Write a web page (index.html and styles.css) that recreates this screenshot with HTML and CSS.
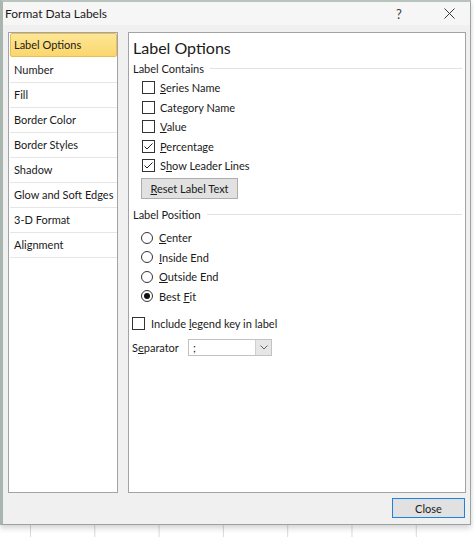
FILE: index.html
```html
<!DOCTYPE html>
<html lang="en">
<head>
    <meta charset="UTF-8">
    <meta name="viewport" content="width=device-width, initial-scale=1.0">
    <title>Format Data Labels</title>
    <link rel="stylesheet" href="styles.css">
</head>
<body>
    <div class="dialog">
        <div class="titlebar">
            <span class="title">Format Data Labels</span>
            <span class="help">?</span>
            <span class="close-x">
                <svg width="11" height="11" viewBox="0 0 11 11"><path d="M0.5 0.5 L10.5 10.5 M10.5 0.5 L0.5 10.5" stroke="#3a3a3a" stroke-width="1" fill="none"/></svg>
            </span>
        </div>

        <div class="body">
            <ul class="nav">
                <li class="active">Label Options</li>
                <li>Number</li>
                <li>Fill</li>
                <li>Border Color</li>
                <li>Border Styles</li>
                <li>Shadow</li>
                <li>Glow and Soft Edges</li>
                <li>3-D Format</li>
                <li>Alignment</li>
            </ul>

            <div class="pane">
                <h1>Label Options</h1>

                <div class="group-title"><span>Label Contains</span></div>
                <div class="options checks">
                    <div class="opt"><span class="box"></span><span><u>S</u>eries Name</span></div>
                    <div class="opt"><span class="box"></span><span>Category Name</span></div>
                    <div class="opt"><span class="box"></span><span><u>V</u>alue</span></div>
                    <div class="opt"><span class="box checked"><svg width="11" height="11" viewBox="0 0 11 11"><path d="M1.5 5.5 L4 8 L9.5 2.5" stroke="#222" stroke-width="1" fill="none"/></svg></span><span><u>P</u>ercentage</span></div>
                    <div class="opt"><span class="box checked"><svg width="11" height="11" viewBox="0 0 11 11"><path d="M1.5 5.5 L4 8 L9.5 2.5" stroke="#222" stroke-width="1" fill="none"/></svg></span><span>S<u>h</u>ow Leader Lines</span></div>
                </div>
                <button class="btn reset"><u>R</u>eset Label Text</button>

                <div class="group-title second"><span>Label Position</span></div>
                <div class="options radios">
                    <div class="opt"><span class="radio"></span><span><u>C</u>enter</span></div>
                    <div class="opt"><span class="radio"></span><span><u>I</u>nside End</span></div>
                    <div class="opt"><span class="radio"></span><span><u>O</u>utside End</span></div>
                    <div class="opt"><span class="radio selected"></span><span>Best <u>F</u>it</span></div>
                </div>

                <div class="opt legend"><span class="box"></span><span>Include <u>l</u>egend key in label</span></div>

                <div class="separator-row">
                    <span class="sep-label">S<u>e</u>parator</span>
                    <div class="combo">
                        <span class="combo-value">;</span>
                        <span class="combo-arrow">
                            <svg width="8" height="5" viewBox="0 0 8 5"><path d="M0.5 0.5 L4 4 L7.5 0.5" stroke="#606060" stroke-width="1" fill="none"/></svg>
                        </span>
                    </div>
                </div>
            </div>
        </div>

        <div class="footer">
            <button class="btn close">Close</button>
        </div>
    </div>
    <div class="sheet"></div>
</body>
</html>
```

FILE: styles.css
```css
* {
    box-sizing: border-box;
}
body {
    margin: 0;
    background-color: #ffffff;
    font-family: Lato, "Liberation Sans", sans-serif;
    font-size: 11px;
    color: #1a1a1a;
}
.dialog {
    width: 471px;
    height: 525px;
    background-color: #f0f0f0;
    border-left: 3px solid #a9b6af;
    border-top: 2px solid #b9c3be;
    border-right: 1px solid #9aa39f;
    border-bottom: 1px solid #9aa39f;
    box-shadow: 0 3px 6px rgba(0,0,0,0.18);
    display: flex;
    flex-direction: column;
    position: relative;
}
.titlebar {
    height: 23px;
    background-color: #f6f6f6;
    display: flex;
    align-items: center;
    padding-left: 2px;
}
.title {
    font-size: 12px;
    flex: 1;
}
.help {
    font-size: 13px;
    color: #3a3a3a;
    width: 10px;
    margin-right: 38px;
}
.close-x {
    display: flex;
    margin-right: 15px;
}
.body {
    display: flex;
    gap: 10px;
    padding: 7px 4px 0 5px;
}
.nav {
    list-style: none;
    margin: 0;
    padding: 0 0 0 1px;
    width: 110px;
    height: 461px;
    background-color: #ffffff;
    border: 1px solid #a3a3a3;
}
.nav li {
    height: 25px;
    line-height: 24px;
    padding-left: 4px;
    border-bottom: 1px solid #e6e6e6;
    white-space: nowrap;
}
.nav li.active {
    height: 24px;
    line-height: 22px;
    margin-bottom: 1px;
    padding-left: 3px;
    border: 1px solid #e6bf5c;
    border-radius: 2px;
    background: linear-gradient(#fde796, #fbd66c);
}
.pane {
    width: 338px;
    height: 461px;
    background-color: #ffffff;
    border: 1px solid #a3a3a3;
    padding: 0 3px 0 3px;
}
.pane h1 {
    font-size: 16px;
    font-weight: normal;
    line-height: 20px;
    margin: 5px 0 0 1px;
}
.group-title {
    display: flex;
    align-items: center;
    height: 16px;
    margin: 2px 0 0 1px;
}
.group-title::after {
    content: "";
    flex: 1;
    border-top: 1px solid #e2e2e2;
    margin-left: 6px;
}
.group-title.second {
    margin-top: 7px;
}
.options {
    margin-top: 2px;
}
.checks {
    padding-left: 10px;
}
.radios {
    padding-left: 9px;
    margin-top: 6px;
}
.opt {
    display: flex;
    align-items: center;
    height: 19.5px;
}
.box {
    width: 13px;
    height: 13px;
    border: 1px solid #333333;
    background-color: #ffffff;
    margin-right: 5px;
    display: flex;
    align-items: center;
    justify-content: center;
}
.radio {
    width: 12px;
    height: 12px;
    border: 1px solid #333333;
    border-radius: 50%;
    margin-right: 6px;
    display: flex;
    align-items: center;
    justify-content: center;
}
.radio.selected::after {
    content: "";
    width: 6px;
    height: 6px;
    border-radius: 50%;
    background-color: #111111;
}
.btn {
    font-family: Lato, "Liberation Sans", sans-serif;
    font-size: 11px;
    color: #1a1a1a;
    background-color: #e1e1e1;
    border: 1px solid #adadad;
    padding: 0;
}
.reset {
    display: block;
    width: 97px;
    height: 21px;
    margin: 2.5px 0 0 9px;
}
.legend {
    margin-top: 8px;
}
.legend .box {
    margin-right: 6px;
}
.separator-row {
    display: flex;
    align-items: center;
    margin-top: 5.5px;
}
.sep-label {
    width: 56px;
}
.combo {
    display: flex;
    width: 84px;
    height: 17px;
    border: 1px solid #c2c2c2;
    background-color: #ffffff;
}
.combo-value {
    flex: 1;
    padding-left: 4px;
    line-height: 15px;
}
.combo-arrow {
    width: 16px;
    background-color: #e6e6e6;
    border-left: 1px solid #d0d0d0;
    display: flex;
    align-items: center;
    justify-content: center;
}
.footer {
    flex: 1;
    display: flex;
    justify-content: flex-end;
    align-items: flex-start;
    padding: 5px 5px 0 0;
}
.close {
    width: 73px;
    height: 20px;
    border: 1px solid #2b7fc9;
    box-shadow: inset 0 0 0 1px #cfe3f5;
}
.sheet {
    height: 12px;
    background-image: linear-gradient(to right, #d9d9d9 1px, transparent 1px);
    background-size: 64.3px 12px;
    background-position: 30px 0;
}
```
